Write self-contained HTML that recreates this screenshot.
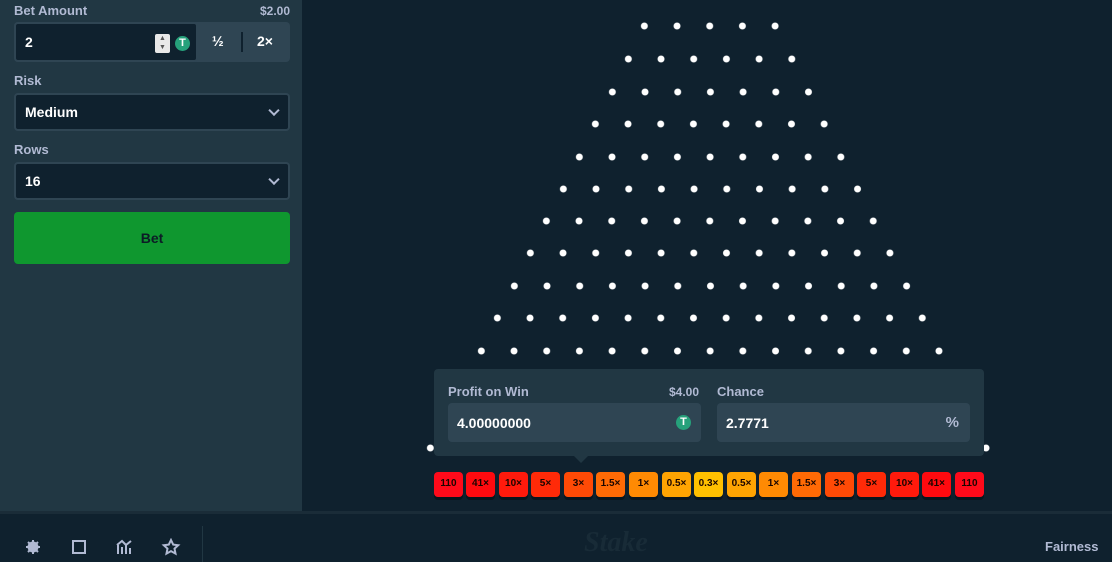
<!DOCTYPE html>
<html><head><meta charset="utf-8"><style>
*{box-sizing:border-box;margin:0;padding:0}
body{width:1112px;height:562px;overflow:hidden;background:#0f212e;font-family:"Liberation Sans",sans-serif;position:relative;color:#fff}
.side{position:absolute;left:0;top:0;width:302px;height:511px;background:#213743}
.lbl{position:absolute;font-size:13px;font-weight:bold;color:#b1bad3}
.inp{position:absolute;background:#0f212e;border:2px solid #2f4553;border-radius:4px;font-size:14px;font-weight:bold;color:#fff;padding-left:9px;display:flex;align-items:center}
.chev{position:absolute;right:10px;top:50%;width:8px;height:8px;border-right:2px solid #b1bad3;border-bottom:2px solid #b1bad3;transform:translateY(-70%) rotate(45deg)}
.teth{display:inline-block;width:15px;height:15px;border-radius:50%;background:#26a17b;color:#fff;font-size:11px;font-weight:bold;text-align:center;line-height:15px}
.row{position:absolute;height:8px;background:radial-gradient(circle,#fff 3.1px,transparent 3.8px) 0 0/32.7px 8px repeat-x}
.bk{position:absolute;top:472px;width:29px;height:25px;border-radius:4px;font-size:10px;font-weight:bold;color:#1a0500;text-align:center;line-height:23px;box-shadow:0 3px 0 rgba(0,0,0,.35)}
.ov{position:absolute;left:434px;top:369px;width:550px;height:87px;background:#213743;border-radius:4px}
.box{position:absolute;background:#2f4553;border-radius:4px;font-size:14px;font-weight:bold;padding-left:9px;display:flex;align-items:center}
</style></head><body>
<div class="side">
<div class="lbl" style="left:14px;top:3px">Bet Amount</div>
<div class="lbl" style="right:12px;top:4px;font-size:12px">$2.00</div>
<div style="position:absolute;left:14px;top:22px;width:276px;height:40px;background:#2f4553;border-radius:4px"></div>
<div class="inp" style="left:14px;top:22px;width:184px;height:40px">2
<span style="position:absolute;right:26px;top:10px;width:15px;height:19px;background:#e8e8e8;border-radius:2px;color:#555;font-size:7px;line-height:9px;text-align:center">▲<br>▼</span>
<span class="teth" style="position:absolute;right:6px;top:12px">T</span></div>
<div style="position:absolute;left:212px;top:33px;font-size:14px;font-weight:bold">½</div>
<div style="position:absolute;left:241px;top:32px;width:2px;height:20px;background:#0f212e"></div>
<div style="position:absolute;left:257px;top:33px;font-size:14px;font-weight:bold">2×</div>
<div class="lbl" style="left:14px;top:73px">Risk</div>
<div class="inp" style="left:14px;top:93px;width:276px;height:38px">Medium<span class="chev"></span></div>
<div class="lbl" style="left:14px;top:142px">Rows</div>
<div class="inp" style="left:14px;top:162px;width:276px;height:38px">16<span class="chev"></span></div>
<div style="position:absolute;left:14px;top:212px;width:276px;height:52px;background:#0f972f;border-radius:4px;color:#0c1c26;font-size:14px;font-weight:bold;text-align:center;line-height:52px">Bet</div>
</div>
<div style="position:absolute;left:302px;top:511px;width:810px;height:3px;background:#1a2c38"></div>

<div class="row" style="left:628.3px;top:22px;width:163.5px"></div>
<div class="row" style="left:611.9px;top:55px;width:196.2px"></div>
<div class="row" style="left:595.6px;top:88px;width:228.9px"></div>
<div class="row" style="left:579.2px;top:120px;width:261.6px"></div>
<div class="row" style="left:562.9px;top:153px;width:294.3px"></div>
<div class="row" style="left:546.5px;top:185px;width:327px"></div>
<div class="row" style="left:530.2px;top:217px;width:359.7px"></div>
<div class="row" style="left:513.8px;top:249px;width:392.4px"></div>
<div class="row" style="left:497.5px;top:282px;width:425.1px"></div>
<div class="row" style="left:481.1px;top:314px;width:457.8px"></div>
<div class="row" style="left:464.8px;top:347px;width:490.5px"></div>
<div class="row" style="left:414px;top:444px;width:588.6px"></div>

<div class="ov">
<div class="lbl" style="left:14px;top:15px;font-size:13px">Profit on Win</div>
<div class="lbl" style="left:235px;top:16px;font-size:12px">$4.00</div>
<div class="box" style="left:14px;top:34px;width:253px;height:39px">4.00000000<span class="teth" style="position:absolute;right:10px;top:12px">T</span></div>
<div class="lbl" style="left:283px;top:15px;font-size:13px">Chance</div>
<div class="box" style="left:283px;top:34px;width:253px;height:39px">2.7771<span style="position:absolute;right:11px;color:#b1bad3;font-size:15px">%</span></div>
<div style="position:absolute;left:140px;top:87px;width:0;height:0;border-left:7px solid transparent;border-right:7px solid transparent;border-top:7px solid #213743"></div>
</div>

<div class="bk" style="left:434px;background:#ff0a1a">110</div>
<div class="bk" style="left:466px;background:#ff0a0f">41×</div>
<div class="bk" style="left:499px;background:#ff1a0c">10×</div>
<div class="bk" style="left:531px;background:#ff2a08">5×</div>
<div class="bk" style="left:564px;background:#ff4a06">3×</div>
<div class="bk" style="left:596px;background:#ff6a05">1.5×</div>
<div class="bk" style="left:629px;background:#ff8a03">1×</div>
<div class="bk" style="left:662px;background:#ffa402">0.5×</div>
<div class="bk" style="left:694px;background:#ffc000">0.3×</div>
<div class="bk" style="left:727px;background:#ffa402">0.5×</div>
<div class="bk" style="left:759px;background:#ff8a03">1×</div>
<div class="bk" style="left:792px;background:#ff6a05">1.5×</div>
<div class="bk" style="left:825px;background:#ff4a06">3×</div>
<div class="bk" style="left:857px;background:#ff2a08">5×</div>
<div class="bk" style="left:890px;background:#ff1a0c">10×</div>
<div class="bk" style="left:922px;background:#ff0a0f">41×</div>
<div class="bk" style="left:955px;background:#ff0a1a">110</div>

<div style="position:absolute;left:0;top:511px;width:302px;height:3px;background:#1a2c38"></div>
<svg style="position:absolute;left:24px;top:538px" width="170" height="18" viewBox="0 0 170 18" fill="none" stroke="#b1bad3" stroke-width="2">
<circle cx="9" cy="9" r="4.5" fill="#b1bad3"/><path d="M9 2v3M9 13v3M2 9h3M13 9h3M4 4l2 2M12 12l2 2M4 14l2-2M12 6l2-2"/>
<rect x="49" y="3" width="12" height="12"/>
<path d="M94 16V7M98 16V9M102 16V6M106 16V10M93 7l5-4 4 4 5-4"/>
<path d="M147 2l2.2 4.6 5 .6-3.7 3.4 1 5-4.5-2.5-4.5 2.5 1-5-3.7-3.4 5-.6z"/>
</svg>
<div style="position:absolute;left:202px;top:526px;width:1px;height:36px;background:#213743"></div>
<div style="position:absolute;left:584px;top:527px;font-size:28px;font-style:italic;font-weight:bold;color:#182b37;font-family:'Liberation Serif',serif">Stake</div>
<div style="position:absolute;left:1045px;top:539px;font-size:13px;font-weight:bold;color:#b1bad3">Fairness</div>
</body></html>
